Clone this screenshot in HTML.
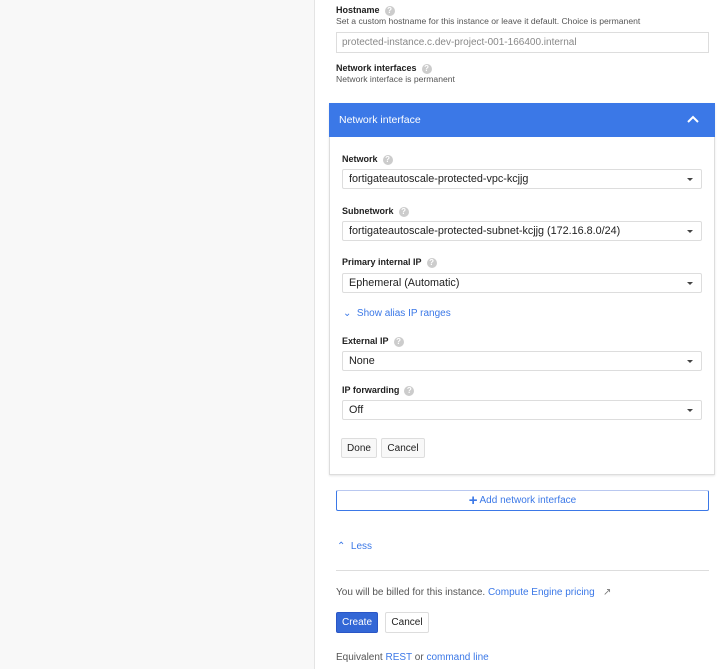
<!DOCTYPE html>
<html><head><meta charset="utf-8"><style>
*{box-sizing:border-box;margin:0;padding:0}
body{width:724px;height:669px;background:#fff;font-family:"Liberation Sans",Arial,sans-serif;font-size:10px;color:#212121;position:relative;overflow:hidden}
.left{position:absolute;left:0;top:0;width:315px;height:669px;background:#f8f8f8;border-right:1px solid #e4e4e4}
.a{position:absolute}
.lbl{font-weight:bold;font-size:9px;color:#212121}
.q{display:inline-block;width:10px;height:10px;border-radius:50%;background:#ccc;color:#fff;font-size:8px;line-height:10px;text-align:center;vertical-align:middle;margin-left:5px;font-weight:bold}
.sub{color:#555;font-size:8.6px}
.sel{position:absolute;left:342px;width:360px;height:20px;border:1px solid #ddd;border-radius:2px;background:#fff;font-size:10.8px;display:flex;align-items:center;padding-left:6px;color:#212121}
.sel:after{content:"";position:absolute;right:8px;top:8px;border-left:3px solid transparent;border-right:3px solid transparent;border-top:3px solid #444}
.btn{position:absolute;height:20px;border:1px solid #ddd;border-radius:2px;background:#f8f8f8;font-size:10px;display:flex;align-items:center;justify-content:center;color:#212121}
.link{color:#3b78e7}
</style></head><body>
<div class="left"></div>
<div class="a lbl" style="left:336px;top:5px">Hostname<span class="q">?</span></div>
<div class="a sub" style="left:336px;top:16px">Set a custom hostname for this instance or leave it default. Choice is permanent</div>
<div class="a" style="left:336px;top:32px;width:373px;height:21px;border:1px solid #ddd;color:#888;display:flex;align-items:center;padding-left:5px">protected-instance.c.dev-project-001-166400.internal</div>
<div class="a lbl" style="left:336px;top:63px">Network interfaces<span class="q">?</span></div>
<div class="a sub" style="left:336px;top:74px">Network interface is permanent</div>
<div class="a" style="left:329px;top:103px;width:386px;height:372px;border:1px solid #ddd;box-shadow:0 1px 2px rgba(0,0,0,.1)"></div>
<div class="a" style="left:329px;top:103px;width:386px;height:34px;background:#3b78e7;color:#fff;font-size:10.5px;line-height:34px;padding-left:10px">Network interface
<svg style="position:absolute;right:16px;top:12px" width="12" height="8" viewBox="0 0 12 8"><path d="M1 7L6 2L11 7" stroke="#fff" stroke-width="2" fill="none"/></svg></div>
<div class="a lbl" style="left:342px;top:154px">Network<span class="q">?</span></div>
<div class="sel" style="top:169px">fortigateautoscale-protected-vpc-kcjjg</div>
<div class="a lbl" style="left:342px;top:206px">Subnetwork<span class="q">?</span></div>
<div class="sel" style="top:221px">fortigateautoscale-protected-subnet-kcjjg (172.16.8.0/24)</div>
<div class="a lbl" style="left:342px;top:257px">Primary internal IP<span class="q">?</span></div>
<div class="sel" style="top:273px">Ephemeral (Automatic)</div>
<div class="a link" style="left:343px;top:308px">⌄&nbsp; Show alias IP ranges</div>
<div class="a lbl" style="left:342px;top:336px">External IP<span class="q">?</span></div>
<div class="sel" style="top:351px">None</div>
<div class="a lbl" style="left:342px;top:385px">IP forwarding<span class="q">?</span></div>
<div class="sel" style="top:400px">Off</div>
<div class="btn" style="left:341px;top:438px;width:36px">Done</div>
<div class="btn" style="left:381px;top:438px;width:44px">Cancel</div>
<div class="a" style="left:336px;top:490px;width:373px;height:21px;border:1px solid #3b78e7;border-top-color:#b9c8f0;border-radius:2px;color:#3b78e7;display:flex;align-items:center;justify-content:center;font-size:10px"><b style="font-size:15px;margin-right:2px">+</b> Add network interface</div>
<div class="a link" style="left:337px;top:541px">⌃&nbsp; Less</div>
<div class="a" style="left:336px;top:570px;width:373px;height:1px;background:#ddd"></div>
<div class="a sub" style="left:336px;top:587px;font-size:10px">You will be billed for this instance. <span class="link">Compute Engine pricing</span> &nbsp; <span style="color:#777">↗</span></div>
<div class="btn" style="left:336px;top:612px;width:42px;height:21px;background:#3367d6;border-color:#2a56c6;color:#fff">Create</div>
<div class="btn" style="left:385px;top:612px;width:44px;height:21px;background:#fff">Cancel</div>
<div class="a sub" style="left:336px;top:652px;font-size:10px">Equivalent <span class="link">REST</span> or <span class="link">command line</span></div>
</body></html>
